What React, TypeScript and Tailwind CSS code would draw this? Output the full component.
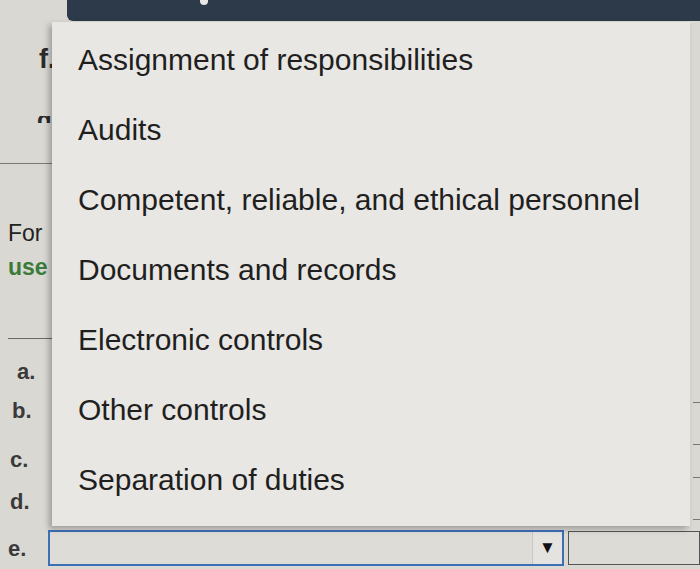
import React from 'react';

const options = [
  'Assignment of responsibilities',
  'Audits',
  'Competent, reliable, and ethical personnel',
  'Documents and records',
  'Electronic controls',
  'Other controls',
  'Separation of duties',
];

export default function App() {
  return (
    <div className="relative h-[569px] w-[700px] overflow-hidden bg-[#d9d8d3] font-['Liberation_Sans',Arial,sans-serif] text-[#2a2a2a]">
      {/* page underneath the open dropdown */}
      <div className="flex h-[528px]">
        <div className="flex w-[52px] flex-col">
          <div className="mt-[44px] h-[30px] pl-[39px] text-[27px] font-bold leading-[30px] text-[#2b2b2b]">f.</div>
          <div className="mt-[42px] h-[7px] overflow-hidden pl-[37px]">
            <div className="mt-[-8px] text-[24px] font-bold leading-[24px] text-[#2b2b2b]">g.</div>
          </div>
          <div className="mt-[40px] border-t border-[#7a7a78]" />
          <div className="mt-[57px] h-[24px] whitespace-nowrap pl-[8px] text-[23px] leading-[24px] text-[#222]">For</div>
          <div className="mt-[10px] h-[24px] whitespace-nowrap pl-[8px] text-[23px] font-bold leading-[24px] text-[#3a7a3a]">use</div>
          <div className="ml-[8px] mt-[59px] border-t border-[#6a6a68]" />
          <div className="mt-[21px] h-[24px] pl-[17px] text-[22px] font-bold leading-[24px] text-[#3a3a3a]">a.</div>
          <div className="mt-[15px] h-[24px] pl-[12px] text-[22px] font-bold leading-[24px] text-[#3a3a3a]">b.</div>
          <div className="mt-[25px] h-[24px] pl-[10px] text-[22px] font-bold leading-[24px] text-[#3a3a3a]">c.</div>
          <div className="mt-[18px] h-[24px] pl-[10px] text-[22px] font-bold leading-[24px] text-[#3a3a3a]">d.</div>
        </div>
        <div className="flex-1" />
        <div className="flex w-[7px] flex-col pt-[402px]">
          <div className="border-t border-[#777]" />
          <div className="mt-[41px] border-t border-[#777]" />
          <div className="mt-[32px] border-t border-[#777]" />
          <div className="mt-[41px] border-t border-[#777]" />
        </div>
      </div>

      <div className="flex h-[41px] items-start pt-[2px]">
        <div className="flex h-[36px] w-[48px] items-center pl-[8px] text-[22px] font-bold text-[#3a3a3a]">e.</div>
        <div className="flex h-[36px] w-[516px] justify-end border-2 border-[#3d6fb8] bg-[#dddcd7]">
          <div className="flex w-[30px] items-center justify-center border-l border-[#c8c7c2] bg-[#e4e3df] text-[17px] text-[#111]">▼</div>
        </div>
        <div className="ml-[4px] mt-[1px] h-[34px] flex-1 border border-[#555] bg-[#dcdbd6]" />
      </div>

      {/* header strip above the menu */}
      <div className="absolute left-[67px] right-0 top-0 flex h-[21px] rounded-bl-[6px] bg-[#2c3a4a]">
        <div className="ml-[133px] h-[5px] w-[8px] rounded-b-full bg-[#e8e8e8]" />
      </div>

      {/* open dropdown list */}
      <div className="absolute left-[52px] top-[22px] flex h-[504px] w-[638px] flex-col bg-[#e8e7e3] pt-[2px] shadow-[-3px_3px_6px_rgba(0,0,0,0.28)]">
        {options.map((o) => (
          <div key={o} className="flex h-[70px] shrink-0 items-center whitespace-nowrap pl-[26px] text-[30px] text-[#1f1f1f]">
            {o}
          </div>
        ))}
      </div>
    </div>
  );
}
